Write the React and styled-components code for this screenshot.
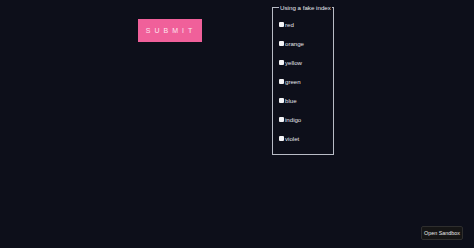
import styled, { createGlobalStyle } from 'styled-components'

const Global = createGlobalStyle`
  html, body {
    margin: 0;
    background: #0d0f1a;
    font-family: "Liberation Sans", Arial, sans-serif;
  }
`

const Page = styled.div`
  width: 474px;
  height: 248px;
  background: #0d0f1a;
  display: flex;
  align-items: flex-start;
  padding: 4px 0 0 138px;
  box-sizing: border-box;
  gap: 70px;
`

const SubmitButton = styled.button`
  margin-top: 15px;
  width: 64px;
  height: 23px;
  background: #f0609a;
  border: none;
  color: #fde4ee;
  font-family: "Liberation Sans", Arial, sans-serif;
  font-size: 7px;
  letter-spacing: 4px;
  padding: 0 0 0 2px;
  cursor: pointer;
`

const Fieldset = styled.fieldset`
  margin: 0;
  width: 62px;
  min-width: 0;
  height: 151px;
  box-sizing: border-box;
  border: 1px solid #b8bcc6;
  padding: 10px 0 0 6px;
  display: flex;
  flex-direction: column;
  gap: 12px;
`

const Legend = styled.legend`
  color: #e6e8ee;
  font-size: 6.2px;
  white-space: nowrap;
  padding: 0 1px;
  margin-left: 0;
`

const Option = styled.label`
  display: flex;
  align-items: center;
  gap: 1px;
  height: 7px;
  color: #e2e4ea;
  font-size: 6.1px;
`

const Box = styled.input`
  appearance: none;
  margin: 0;
  width: 5px;
  height: 5px;
  background: #f4f4f6;
  border-radius: 1px;
`

const SandboxLink = styled.a`
  position: fixed;
  right: 11px;
  bottom: 8px;
  padding: 3px 2px;
  background: #151515;
  border: 1px solid #2e2e2e;
  border-radius: 2px;
  color: #e8e8e8;
  font-size: 5.4px;
  text-decoration: none;
`

const colors = ['red', 'orange', 'yellow', 'green', 'blue', 'indigo', 'violet']

export default function App() {
  return (
    <>
      <Global />
      <Page>
        <SubmitButton>SUBMIT</SubmitButton>
        <Fieldset>
          <Legend>Using a fake index</Legend>
          {colors.map((c) => (
            <Option key={c}>
              <Box type="checkbox" />
              {c}
            </Option>
          ))}
        </Fieldset>
      </Page>
      <SandboxLink href="#">Open Sandbox</SandboxLink>
    </>
  )
}
